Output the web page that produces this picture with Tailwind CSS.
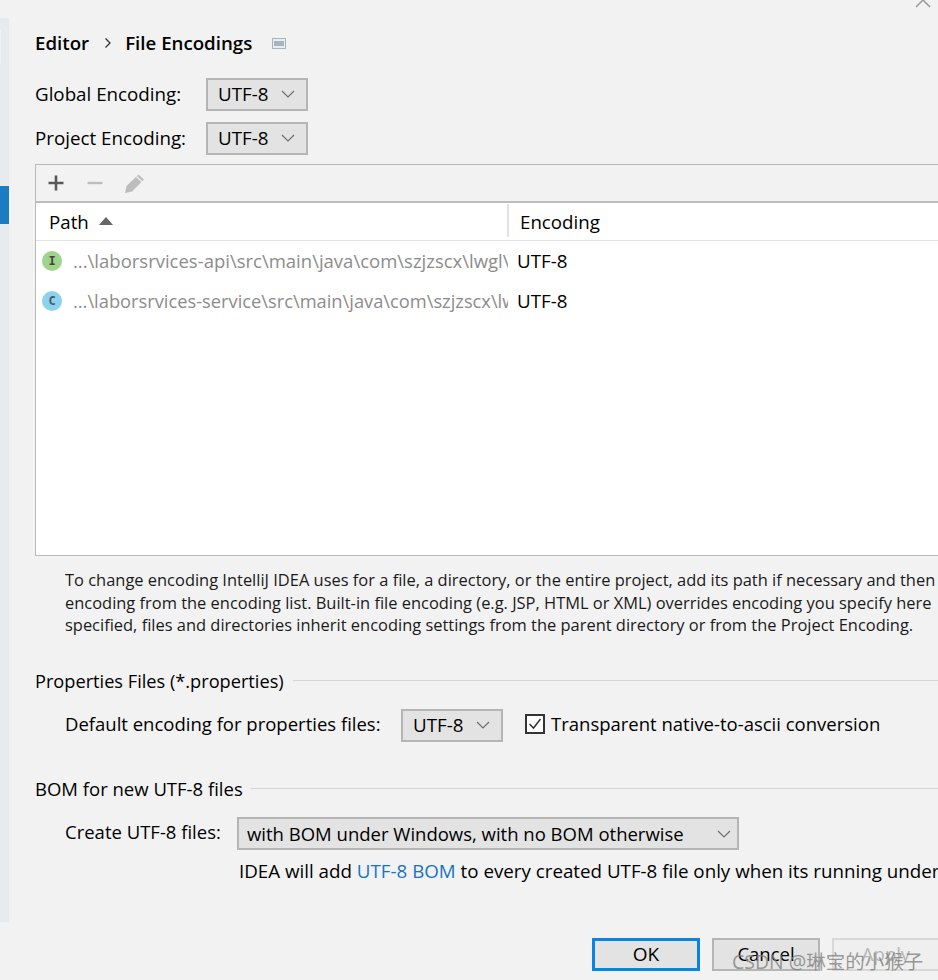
<!DOCTYPE html>
<html><head><meta charset="utf-8"><script src="https://cdn.jsdelivr.net/npm/@tailwindcss/browser@4"></script></head>
<body class="m-0">
<div class="relative flex w-[938px] h-[980px] overflow-hidden bg-[#f2f2f2] text-black font-['Open_Sans','Noto_Sans_CJK_SC',sans-serif] text-[18.5px] leading-[24px]">
  <div class="w-[9px] shrink-0 mt-[18px] h-[904px] bg-[#e6ebf0] flex flex-col">
    <div class="mt-[12px] h-[34px] w-[1px] bg-[#f0f3f5]"></div>
    <div class="mt-[122px] h-[38px] bg-[#1a7dc4]"></div>
  </div>
  <div class="w-[929px] shrink-0 flex flex-col pl-[26px]">
    <div class="flex items-center h-[30px] mt-[28px] font-semibold text-[18.7px]">
      <span>Editor</span>
      <svg class="ml-[15px]" width="8" height="12" viewBox="0 0 8 12" fill="none"><path d="M1.5 1.5 6 6 1.5 10.5" stroke="#333" stroke-width="1.3"/></svg>
      <span class="ml-[13px]">File Encodings</span>
      <svg class="ml-[20px]" width="14" height="11" viewBox="0 0 14 11"><rect x="0.5" y="0.5" width="13" height="10" fill="#e8edf0" stroke="#a9b5be"/><rect x="2" y="3" width="10" height="5" fill="#a9b5be"/></svg>
    </div>
    <div class="flex items-center mt-[20px] h-[33px]">
      <span class="w-[171px] -mt-[1px] text-[18.75px]">Global Encoding:</span>
      <div class="w-[102px] h-[33px] border-2 border-[#b5b5b5] bg-[#e3e3e3] flex items-center pl-[10px] pr-[11px] pb-[1px] justify-between text-[18.75px]">
        <span>UTF-8</span>
        <svg width="14" height="8" viewBox="0 0 14 8" fill="none"><path d="M1 1 7 7 13 1" stroke="#6e6e6e" stroke-width="1.2"/></svg>
      </div>
    </div>
    <div class="flex items-center mt-[11px] h-[33px]">
      <span class="w-[171px] -mt-[1px] text-[18.75px]">Project Encoding:</span>
      <div class="w-[102px] h-[33px] border-2 border-[#b5b5b5] bg-[#e3e3e3] flex items-center pl-[10px] pr-[11px] pb-[1px] justify-between text-[18.75px]">
        <span>UTF-8</span>
        <svg width="14" height="8" viewBox="0 0 14 8" fill="none"><path d="M1 1 7 7 13 1" stroke="#6e6e6e" stroke-width="1.2"/></svg>
      </div>
    </div>
    <div class="mt-[9px] w-[910px] h-[392px] border border-r-0 border-[#b9b9b9] flex flex-col bg-white">
      <div class="h-[38px] shrink-0 bg-[#f2f2f2] border-b-2 border-[#bdbdbd] flex items-center pl-[12px] gap-[23px]">
        <svg width="16" height="16" viewBox="0 0 16 16"><path d="M8 0.5V15.5M0.5 8H15.5" stroke="#595959" stroke-width="2.6"/></svg>
        <svg width="16" height="16" viewBox="0 0 16 16"><path d="M0.5 8H15.5" stroke="#bdbdbd" stroke-width="2.4"/></svg>
        <svg class="-ml-[2px]" width="22" height="22" viewBox="0 0 22 22"><path d="M1 21 2.5 14 14.5 2.5 20 7.5 8 19.5Z" fill="#bdbdbd"/><path d="M12.5 4.5 18 9.8" stroke="#f2f2f2" stroke-width="1.2"/></svg>
      </div>
      <div class="h-[38px] shrink-0 border-b border-[#e3e3e3] flex text-[18.7px]">
        <div class="w-[471px] h-full flex items-center pl-[13px] pt-[1px]">
          <span>Path</span>
          <svg class="ml-[10px] -mt-[3px]" width="14" height="8" viewBox="0 0 14 8"><path d="M7 0 14 8H0Z" fill="#666"/></svg>
        </div>
        <div class="w-[2px] h-[33px] mt-[1px] bg-[#e2e2e2]"></div>
        <div class="flex items-center pl-[11px] pt-[1px]">Encoding</div>
      </div>
      <div class="h-[40px] shrink-0 flex items-center">
        <div class="w-[472px] flex items-center pl-[6px] overflow-hidden shrink-0">
          <div class="w-[20px] h-[20px] rounded-full bg-[#9fd48b] shrink-0 flex items-center justify-center font-['DejaVu_Sans_Mono',monospace] text-[12px] font-bold text-[#444]">I</div>
          <span class="ml-[11px] text-[#8c8c8c] whitespace-nowrap">...\laborsrvices-api\src\main\java\com\szjzscx\lwgl\</span>
        </div>
        <span class="pl-[9px] text-[18.75px]">UTF-8</span>
      </div>
      <div class="h-[40px] shrink-0 flex items-center">
        <div class="w-[472px] flex items-center pl-[6px] overflow-hidden shrink-0">
          <div class="w-[20px] h-[20px] rounded-full bg-[#8cd2ef] shrink-0 flex items-center justify-center font-['DejaVu_Sans_Mono',monospace] text-[12px] font-bold text-[#44586a]">C</div>
          <span class="ml-[11px] text-[#8c8c8c] whitespace-nowrap text-[18.3px]">...\laborsrvices-service\src\main\java\com\szjzscx\lw</span>
        </div>
        <span class="pl-[9px] text-[18.75px]">UTF-8</span>
      </div>
    </div>
    <div class="mt-[13px] ml-[30px] w-[873px] overflow-hidden text-[16.45px] leading-[22.5px] whitespace-nowrap text-[#1a1a1a]">
      <div>To change encoding IntelliJ IDEA uses for a file, a directory, or the entire project, add its path if necessary and then</div>
      <div>encoding from the encoding list. Built-in file encoding (e.g. JSP, HTML or XML) overrides encoding you specify here</div>
      <div>specified, files and directories inherit encoding settings from the parent directory or from the Project Encoding.</div>
    </div>
    <div class="flex items-center mt-[32px] h-[24px]">
      <span class="whitespace-nowrap text-[18.2px]">Properties Files (*.properties)</span>
      <div class="flex-1 h-px bg-[#d4d4d4] ml-[9px] mr-0"></div>
    </div>
    <div class="flex items-center mt-[16px] ml-[30px] h-[33px]">
      <span class="w-[336px] whitespace-nowrap -mt-[2px]">Default encoding for properties files:</span>
      <div class="w-[102px] h-[33px] border-2 border-[#b5b5b5] bg-[#e3e3e3] flex items-center pl-[10px] pr-[11px] pb-[1px] justify-between text-[18.75px]">
        <span>UTF-8</span>
        <svg width="14" height="8" viewBox="0 0 14 8" fill="none"><path d="M1 1 7 7 13 1" stroke="#6e6e6e" stroke-width="1.2"/></svg>
      </div>
      <svg class="ml-[22px] -mt-[2px]" width="20" height="20" viewBox="0 0 20 20"><rect x="1" y="1" width="18" height="18" fill="#fff" stroke="#333" stroke-width="2"/><path d="M4.5 10 8.5 14 15.5 5" fill="none" stroke="#333" stroke-width="1.5"/></svg>
      <span class="ml-[6px] whitespace-nowrap -mt-[2px]">Transparent native-to-ascii conversion</span>
    </div>
    <div class="flex items-center mt-[35px] h-[24px]">
      <span class="whitespace-nowrap">BOM for new UTF-8 files</span>
      <div class="flex-1 h-px bg-[#d4d4d4] ml-[8px]"></div>
    </div>
    <div class="flex items-center mt-[16px] ml-[30px] h-[33px]">
      <span class="w-[172px] whitespace-nowrap -mt-[2px]">Create UTF-8 files:</span>
      <div class="w-[502px] h-[33px] border-2 border-[#b5b5b5] bg-[#e3e3e3] flex items-center pl-[8px] pr-[6px] pt-[1px] justify-between">
        <span class="whitespace-nowrap">with BOM under Windows, with no BOM otherwise</span>
        <svg width="14" height="8" viewBox="0 0 14 8" fill="none"><path d="M1 1 7 7 13 1" stroke="#6e6e6e" stroke-width="1.2"/></svg>
      </div>
    </div>
    <div class="mt-[9px] ml-[204px] whitespace-nowrap text-[18.75px]">IDEA will add <span class="text-[#1a72c4]">UTF-8 BOM</span> to every created UTF-8 file only when its running under</div>
    <div class="mt-auto mb-[9px] flex gap-[12px] pl-[557px]">
      <div class="w-[108px] h-[33px] shrink-0 border-[3px] border-[#0a84e4] bg-[#e3e3e3] flex items-center justify-center pb-[1px] text-[19px]">OK</div>
      <div class="w-[108px] h-[33px] shrink-0 border-2 border-[#b5b5b5] bg-[#e3e3e3] flex items-center justify-center pb-[1px]">Cancel</div>
      <div class="w-[108px] h-[33px] shrink-0 border-2 border-[#d8d8d8] bg-[#efefef] flex items-center justify-center pb-[1px] text-[#b5b5b5]">Apply</div>
    </div>
  </div>
  <svg class="absolute left-[915px] top-0" width="18" height="8" viewBox="0 0 18 8" fill="none"><path d="M1 7 8 0 15 7" stroke="#9a9a9a" stroke-width="1.5"/></svg>
  <div class="absolute left-[732px] top-[949px] text-[19.5px] leading-[26px] text-[#7f7f7f]/80 whitespace-nowrap">CSDN @琳宝的小猴子</div>
</div>
</body></html>
